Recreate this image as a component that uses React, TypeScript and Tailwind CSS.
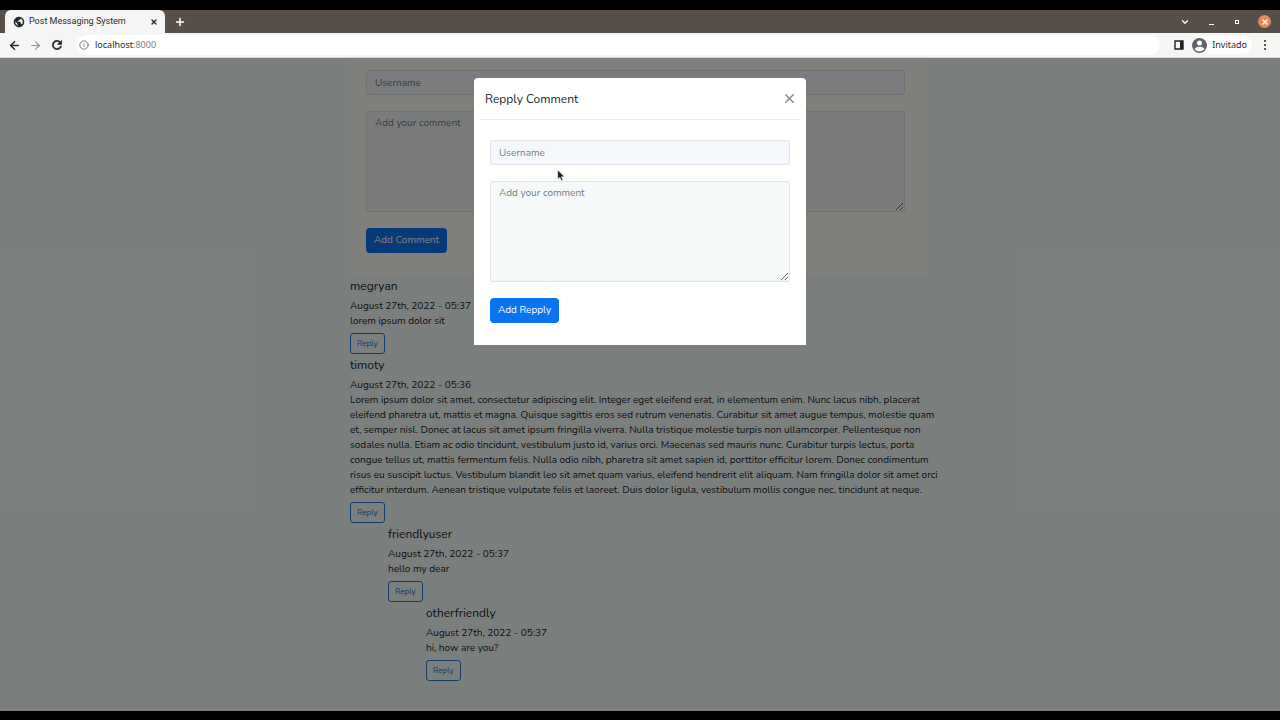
import React from "react";
import { X, Info, ChevronDown, Plus, ArrowLeft, ArrowRight } from "lucide-react";

interface Comment {
  id: number;
  username: string;
  date: string;
  lines: string[];
  replies?: Comment[];
}

const comments: Comment[] = [
  {
    id: 1,
    username: "megryan",
    date: "August 27th, 2022 - 05:37",
    lines: ["lorem ipsum dolor sit"],
  },
  {
    id: 2,
    username: "timoty",
    date: "August 27th, 2022 - 05:36",
    lines: [
      "Lorem ipsum dolor sit amet, consectetur adipiscing elit. Integer eget eleifend erat, in elementum enim. Nunc lacus nibh, placerat",
      "eleifend pharetra ut, mattis et magna. Quisque sagittis eros sed rutrum venenatis. Curabitur sit amet augue tempus, molestie quam",
      "et, semper nisl. Donec at lacus sit amet ipsum fringilla viverra. Nulla tristique molestie turpis non ullamcorper. Pellentesque non",
      "sodales nulla. Etiam ac odio tincidunt, vestibulum justo id, varius orci. Maecenas sed mauris nunc. Curabitur turpis lectus, porta",
      "congue tellus ut, mattis fermentum felis. Nulla odio nibh, pharetra sit amet sapien id, porttitor efficitur lorem. Donec condimentum",
      "risus eu suscipit luctus. Vestibulum blandit leo sit amet quam varius, eleifend hendrerit elit aliquam. Nam fringilla dolor sit amet orci",
      "efficitur interdum. Aenean tristique vulputate felis et laoreet. Duis dolor ligula, vestibulum mollis congue nec, tincidunt at neque.",
    ],
    replies: [
      {
        id: 3,
        username: "friendlyuser",
        date: "August 27th, 2022 - 05:37",
        lines: ["hello my dear"],
        replies: [
          {
            id: 4,
            username: "otherfriendly",
            date: "August 27th, 2022 - 05:37",
            lines: ["hi, how are you?"],
          },
        ],
      },
    ],
  },
];

const BrowserBar: React.FC = () => {
  return (
    <header className="font-['Noto_Sans','Open_Sans',sans-serif] text-[9px] text-[#2b2b2b]">
      <div className="flex h-[23px] items-center bg-[#574f49] pl-[5px] text-white">
        <div className="flex h-full w-40 items-center rounded-t-md bg-[#f5f6f4] pr-[7px] pl-2 text-[#2b2b2b]">
          <svg viewBox="0 0 24 24" className="mr-1 h-3 w-3" fill="#1f2023">
            <path d="M12 2C6.48 2 2 6.48 2 12s4.480 10 10 10 10-4.480 10-10S17.520 2 12 2zm-1 17.930c-3.950-.490-7-3.850-7-7.930 0-.620.080-1.210.210-1.790L9 15v1c0 1.100.900 2 2 2v1.930zm6.900-2.540c-.260-.810-1-1.390-1.900-1.390h-1v-3c0-.550-.450-1-1-1H8v-2h2c.550 0 1-.450 1-1V7h2c1.100 0 2-.900 2-2v-.410c2.930 1.190 5 4.060 5 7.410 0 2.080-.800 3.970-2.100 5.390z" stroke="#1f2023" strokeWidth="1" />
          </svg>
          <span className="flex-1 whitespace-nowrap font-['Roboto',sans-serif]">Post Messaging System</span>
          <button aria-label="Close tab">
            <X className="h-2 w-2" strokeWidth={4} />
          </button>
        </div>
        <button aria-label="New tab" className="ml-[9px]">
          <Plus className="h-3 w-3" strokeWidth={3} />
        </button>
        <div className="ml-auto flex items-center gap-4 pr-[9px]">
          <button aria-label="Search tabs">
            <ChevronDown className="h-[10px] w-[10px]" strokeWidth={3} />
          </button>
          <button aria-label="Minimize" className="flex h-[10px] w-[10px] items-end justify-center pb-[2px]">
            <span className="h-px w-[5px] bg-white" />
          </button>
          <button aria-label="Maximize" className="flex h-[10px] w-[10px] items-center justify-center">
            <span className="h-1 w-1 border border-white" />
          </button>
          <button aria-label="Close window" className="flex h-[13px] w-[13px] items-center justify-center rounded-full bg-[#e58a55]">
            <X className="h-2 w-2" strokeWidth={4} />
          </button>
        </div>
      </div>
      <div className="flex h-[25px] items-center border-b border-[#d5d6d5] bg-[#f5f6f4] pr-[10px] pl-2">
        <button aria-label="Back">
          <ArrowLeft className="h-[13px] w-[13px]" strokeWidth={3} />
        </button>
        <button aria-label="Forward" className="ml-2 text-[#8d8f90]">
          <ArrowRight className="h-[13px] w-[13px]" strokeWidth={2} />
        </button>
        <button aria-label="Reload" className="ml-2">
          <svg viewBox="0 0 24 24" className="h-[14px] w-[14px]" fill="#1f2023">
            <path d="M17.650 6.350A7.958 7.958 0 0 0 12 4c-4.420 0-7.990 3.580-7.990 8s3.570 8 7.990 8c3.730 0 6.840-2.550 7.730-6h-2.080A5.990 5.990 0 0 1 12 18c-3.310 0-6-2.690-6-6s2.690-6 6-6c1.660 0 3.140.690 4.220 1.780L13 11h7V4l-2.350 2.350z" stroke="#1f2023" strokeWidth="1" />
          </svg>
        </button>
        <div className="ml-3 flex h-5 flex-1 items-center rounded-full bg-white pl-[3px]">
          <Info className="mr-[6px] h-[10px] w-[10px] text-[#5f6368]" strokeWidth={2} />
          <span>
            localhost<span className="text-[#7b7d80]">:8000</span>
          </span>
        </div>
        <button aria-label="Side panel" className="ml-[14px]">
          <svg viewBox="0 0 10 10" className="h-[10px] w-[10px]">
            <path d="M1 1H9V9H1Z" fill="none" stroke="#1f2023" strokeWidth="1.400" />
            <path d="M6 1H9V9H6Z" fill="#1f2023" />
          </svg>
        </button>
        <button className="ml-2 flex h-[18px] items-center gap-[5px] rounded-full bg-white pr-[5px]">
          <svg viewBox="0 0 24 24" className="h-[15px] w-[15px]">
            <circle cx="12" cy="12" r="12" fill="#5f6368" />
            <circle cx="12" cy="8" r="4" fill="#fff" />
            <path d="M4 17.500C5.500 14.800 9 13.800 12 13.800s6.500 1 8 3.700C18.300 20 15.400 21.500 12 21.500S5.700 20 4 17.500Z" fill="#fff" />
          </svg>
          Invitado
        </button>
        <button aria-label="Menu" className="ml-2">
          <svg viewBox="0 0 10 10" className="h-[10px] w-[10px]" fill="#1f2023">
            <circle cx="5" cy="1" r="1" />
            <circle cx="5" cy="5" r="1" />
            <circle cx="5" cy="9" r="1" />
          </svg>
        </button>
      </div>
    </header>
  );
};

interface CommentFormProps {
  id: string;
  submitLabel: string;
}

const CommentForm: React.FC<CommentFormProps> = ({ id, submitLabel }) => {
  return (
    <form className="flex flex-col items-start gap-4" onSubmit={(e) => e.preventDefault()}>
      <input
        id={`${id}-username`}
        aria-label="Username"
        placeholder="Username"
        className="h-[25px] w-full rounded-[3px] border border-[#dee3e3] bg-[#f5f8fa] px-2 placeholder:text-[#757c80]"
      />
      <textarea
        id={`${id}-comment`}
        aria-label="Add your comment"
        placeholder="Add your comment"
        className="block h-[101px] w-full resize-y rounded-[3px] border border-[#dee3e3] bg-[#f5f9f9] px-2 py-1 placeholder:text-[#757c80]"
      />
      <button className="h-[25px] rounded bg-[#0a74f0] px-2 text-white">{submitLabel}</button>
    </form>
  );
};

const CommentItem: React.FC<{ comment: Comment }> = ({ comment }) => {
  return (
    <article>
      <h5 className="mb-1 text-xs leading-4">{comment.username}</h5>
      <p className="leading-4">{comment.date}</p>
      <p>
        {comment.lines.map((line) => (
          <span key={line} className="block whitespace-nowrap">
            {line}
          </span>
        ))}
      </p>
      <button className="mt-1 mb-[3px] block h-[21px] rounded-[3px] border border-[#2a74d8] px-[6px] text-[8px] leading-3 text-[#2a74d8]">
        Reply
      </button>
      {comment.replies && (
        <div className="ml-[38px]">
          {comment.replies.map((reply) => (
            <CommentItem key={reply.id} comment={reply} />
          ))}
        </div>
      )}
    </article>
  );
};

const ReplyModal: React.FC = () => {
  return (
    <div className="absolute inset-0 flex items-start justify-center bg-black/50 pt-5">
      <div role="dialog" aria-labelledby="modal-title" className="relative w-[332px] rounded-t-[4px] bg-[#fffffd] pb-[22px]">
        <div className="mx-[5px] flex h-[42px] items-center justify-between border-b border-[#e9ebe9] pr-1 pl-[6px]">
          <h5 id="modal-title" className="text-xs">
            Repply Comment
          </h5>
          <button aria-label="Close" className="text-[#7d7f7f]">
            <X className="h-[15px] w-[15px]" strokeWidth={2} />
          </button>
        </div>
        <div className="px-4 pt-5">
          <CommentForm id="reply" submitLabel="Add Repply" />
        </div>
        {/* mouse pointer */}
        <svg viewBox="0 0 12 19" className="absolute top-[91px] left-[83px] h-[13px] w-2">
          <path d="M1 1V15.500L4.300 12.400L6.500 17.800L9 16.700L6.800 11.500H11.300Z" fill="#1a1a1a" stroke="#fff" strokeWidth="1" />
        </svg>
      </div>
    </div>
  );
};

const App: React.FC = () => {
  return (
    <div className="flex min-h-screen flex-col bg-black pt-[10px] pb-[9px]">
      <BrowserBar />
      <main className="relative flex-1 bg-[#f5fdfa] pr-0.5 font-['Nunito','Open_Sans',sans-serif] text-[10px] leading-[15px] text-[#212529]">
        <div className="mx-auto w-[578px]">
          <section className="mb-[3px] bg-[#fffff7] pt-3 pr-[23px] pb-[22px] pl-4">
            <CommentForm id="post" submitLabel="Add Comment" />
          </section>
          {comments.map((comment) => (
            <CommentItem key={comment.id} comment={comment} />
          ))}
        </div>
        <ReplyModal />
      </main>
    </div>
  );
};

export default App;
